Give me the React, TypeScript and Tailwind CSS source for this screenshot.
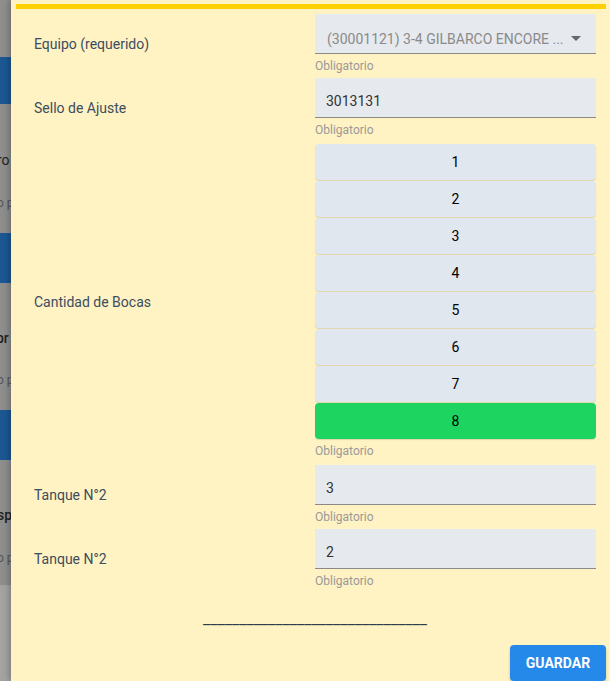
import React from "react";

const labelCls = "text-sm text-[#3c4d60]";

const Helper = () => (
  <div className="mt-1 text-xs leading-4 text-[#9a9a9a]">Obligatorio</div>
);

const FieldRow = ({ label, children }: { label: string; children: React.ReactNode }) => (
  <div className="flex items-center">
    <div className={`w-[281px] ${labelCls}`}>{label}</div>
    <div className="w-[281px]">
      {children}
      <Helper />
    </div>
  </div>
);

const TextField = ({ value }: { value: string }) => (
  <div className="flex h-10 items-center border-b border-[#8a8a8a] bg-[#e6e9ee] pt-[6px] pl-[11px] text-sm text-[#333]">
    {value}
  </div>
);

const SelectField = ({ value }: { value: string }) => (
  <div className="flex h-10 items-center justify-between border-b border-[#8a8a8a] bg-[#e6e9ee] pt-[10px] pl-3 pr-[15px] text-sm text-[#8a8a8a]">
    <span className="whitespace-nowrap">{value}</span>
    <svg width="10" height="5" viewBox="0 0 10 5" className="shrink-0">
      <path d="M0 0 L10 0 L5 5 Z" fill="#666" />
    </svg>
  </div>
);

// dimmed page behind the panel
const BackStrip = () => (
  <div className="flex w-[11px] shrink-0 flex-col overflow-hidden bg-[#8e8e8e]">
    <div className="h-[57px] shrink-0" />
    <div className="h-[47px] shrink-0 bg-[#1c5794]" />
    <div className="flex h-[129px] shrink-0 flex-col">
      <div className="mt-[46px] ml-[-3px] whitespace-nowrap text-sm text-[#222]">ro</div>
      <div className="mt-[25px] ml-[-3px] whitespace-nowrap text-xs text-[#555]">o p</div>
    </div>
    <div className="h-[50px] shrink-0 bg-[#1c5794]" />
    <div className="flex h-[127px] shrink-0 flex-col">
      <div className="mt-[45px] ml-[-4px] whitespace-nowrap text-sm font-medium text-[#222]">pr</div>
      <div className="mt-[24px] ml-[-3px] whitespace-nowrap text-xs text-[#555]">o p</div>
    </div>
    <div className="h-[50px] shrink-0 bg-[#1c5794]" />
    <div className="flex h-[125px] shrink-0 flex-col">
      <div className="mt-[45px] ml-[-3px] whitespace-nowrap text-sm font-medium text-[#222]">sp</div>
      <div className="mt-[25px] ml-[-3px] whitespace-nowrap text-xs text-[#555]">o p</div>
    </div>
    <div className="flex-1 bg-[#a3a3a3]" />
  </div>
);

export default function App() {
  const bocas = [1, 2, 3, 4, 5, 6, 7, 8];
  const selected = 8;

  return (
    <div className="flex h-[681px] w-[610px] overflow-hidden font-['Roboto',sans-serif]">
      <BackStrip />
      <div className="flex flex-1 flex-col bg-[#fff2c3] shadow-[-2px_0_6px_rgba(0,0,0,0.25)]">
        <div className="mt-1 ml-[5px] mr-1 h-[5px] shrink-0 bg-[#ffd000]" />

        <div className="mt-[5px] flex shrink-0 flex-col gap-1 pl-[23px] pr-[14px]">
          <FieldRow label="Equipo (requerido)">
            <SelectField value="(30001121) 3-4 GILBARCO ENCORE ..." />
          </FieldRow>

          <FieldRow label="Sello de Ajuste">
            <TextField value="3013131" />
          </FieldRow>

          <div className="mt-[2px]">
            <FieldRow label="Cantidad de Bocas">
              <div className="flex flex-col gap-px">
                {bocas.map((n) => (
                  <button
                    key={n}
                    className={`h-9 rounded-[4px] text-sm text-black shadow-[0_1px_1px_rgba(0,0,0,0.12)] ${
                      n === selected ? "bg-[#1dd460]" : "bg-[#e1e7ef]"
                    }`}
                  >
                    {n}
                  </button>
                ))}
              </div>
            </FieldRow>
          </div>

          <div className="mt-[2px]">
            <FieldRow label="Tanque N°2">
              <TextField value="3" />
            </FieldRow>
          </div>

          <FieldRow label="Tanque N°2">
            <TextField value="2" />
          </FieldRow>

          <div className="mt-[14px] text-center text-base text-[#2c3e50]">
            _______________________________
          </div>
        </div>

        <div className="mt-[14px] flex shrink-0 justify-end pr-1">
          <button className="h-9 w-24 rounded-[4px] bg-[#2589e9] text-sm font-bold text-white shadow-[0_2px_3px_rgba(0,0,0,0.2)]">
            GUARDAR
          </button>
        </div>
      </div>
    </div>
  );
}
